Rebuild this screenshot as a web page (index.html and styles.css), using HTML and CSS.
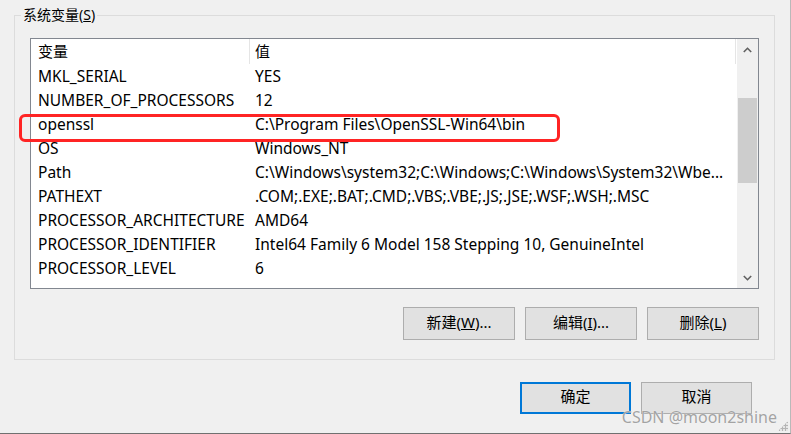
FILE: index.html
```html
<!DOCTYPE html>
<html lang="zh-CN">
<head>
  <meta charset="UTF-8">
  <title>环境变量</title>
  <link rel="stylesheet" href="styles.css">
</head>
<body>
  <div class="window">
    <fieldset class="group">
      <legend>系统变量(<u>S</u>)</legend>
      <div class="group-body">
        <div class="listview">
          <div class="table">
            <div class="row head">
              <div class="cell name">变量</div>
              <div class="cell value">值</div>
            </div>
            <div class="row"><div class="cell">MKL_SERIAL</div><div class="cell">YES</div></div>
            <div class="row"><div class="cell">NUMBER_OF_PROCESSORS</div><div class="cell">12</div></div>
            <div class="row"><div class="cell">openssl</div><div class="cell">C:\Program Files\OpenSSL-Win64\bin</div></div>
            <div class="row"><div class="cell">OS</div><div class="cell">Windows_NT</div></div>
            <div class="row"><div class="cell">Path</div><div class="cell">C:\Windows\system32;C:\Windows;C:\Windows\System32\Wbe...</div></div>
            <div class="row"><div class="cell">PATHEXT</div><div class="cell">.COM;.EXE;.BAT;.CMD;.VBS;.VBE;.JS;.JSE;.WSF;.WSH;.MSC</div></div>
            <div class="row"><div class="cell">PROCESSOR_ARCHITECTURE</div><div class="cell">AMD64</div></div>
            <div class="row"><div class="cell">PROCESSOR_IDENTIFIER</div><div class="cell">Intel64 Family 6 Model 158 Stepping 10, GenuineIntel</div></div>
            <div class="row"><div class="cell">PROCESSOR_LEVEL</div><div class="cell">6</div></div>
          </div>
          <div class="scrollbar">
            <div class="arrow">
              <svg width="9" height="6" viewBox="0 0 9 6"><polyline points="0.8,5 4.5,1.3 8.2,5" fill="none" stroke="#606060" stroke-width="1.6"/></svg>
            </div>
            <div class="track"><div class="thumb"></div></div>
            <div class="arrow">
              <svg width="9" height="6" viewBox="0 0 9 6"><polyline points="0.8,1 4.5,4.7 8.2,1" fill="none" stroke="#606060" stroke-width="1.6"/></svg>
            </div>
          </div>
          <div class="mark"></div>
        </div>
        <div class="actions">
          <button class="btn">新建(<u>W</u>)...</button>
          <button class="btn">编辑(<u>I</u>)...</button>
          <button class="btn">删除(<u>L</u>)</button>
        </div>
      </div>
    </fieldset>

    <div class="dialog-actions">
      <button class="btn btn-default">确定</button>
      <button class="btn">取消</button>
    </div>

    <div class="watermark">CSDN @moon2shine</div>
    <div class="grip"></div>
  </div>
</body>
</html>
```

FILE: styles.css
```css
body {
  margin: 0;
  font-family: "Noto Sans", "Noto Sans CJK SC", sans-serif;
  font-size: 15px;
  color: #000000;
  background-color: #f0f0f0;
}

.window {
  position: relative;
  width: 790px;
  height: 433px;
  background-color: #f0f0f0;
  border-right: 1px solid #b9b9b9;
  border-bottom: 1px solid #707070;
  overflow: hidden;
}

.group {
  width: 761px;
  box-sizing: border-box;
  margin: 6px 0 0 14px;
  padding: 0;
  border: 1px solid #dcdcdc;
}

.group legend {
  margin-left: 6px;
  padding: 0 2px;
  font-size: 14px;
  line-height: 18px;
}

.group-body {
  padding: 14px 15px 19px 15px;
}

.listview {
  position: relative;
  display: flex;
  height: 251px;
  box-sizing: border-box;
  border: 1px solid #828790;
  background: #ffffff;
}

.table {
  flex: 1;
  overflow: hidden;
  font-size: 15.5px;
}

.row {
  display: grid;
  grid-template-columns: 219px 1fr;
  height: 24px;
  line-height: 24px;
  white-space: nowrap;
}

.row.head {
  height: 25px;
  line-height: 25px;
}

.cell {
  padding-left: 7px;
  overflow: hidden;
}

.cell + .cell {
  padding-left: 5px;
}

.head .cell {
  font-size: 15px;
}

.head .name {
  border-right: 1px solid #e5e5e5;
}

.head .value {
  border-right: 1px solid #e5e5e5;
  margin-right: 1px;
}

.scrollbar {
  width: 21px;
  display: flex;
  flex-direction: column;
  background: #f0f0f0;
}

.arrow {
  height: 21px;
  display: flex;
  align-items: center;
  justify-content: center;
}

.track {
  flex: 1;
}

.thumb {
  margin: 38px 1px 0 1px;
  height: 85px;
  background: #cdcdcd;
}

/* red frame round the openssl row */
.mark {
  position: absolute;
  left: -12px;
  top: 75px;
  width: 541px;
  height: 28px;
  box-sizing: border-box;
  border: 3px solid #ff2424;
  border-radius: 6px;
}

.actions {
  display: flex;
  justify-content: flex-end;
  gap: 10px;
  margin-top: 18px;
}

.btn {
  width: 112px;
  height: 33px;
  padding: 0 0 5px 0;
  font-family: "Noto Sans", "Noto Sans CJK SC", sans-serif;
  font-size: 15px;
  color: #000000;
  background: #e1e1e1;
  border: 1px solid #adadad;
}

.dialog-actions {
  display: flex;
  justify-content: flex-end;
  gap: 10px;
  margin-top: 22px;
  padding-right: 38px;
}

.dialog-actions .btn {
  width: 111px;
  height: 32px;
}

.btn-default {
  border: 2px solid #0078d7;
}

.watermark {
  position: absolute;
  right: 13px;
  bottom: 5px;
  font-size: 16px;
  color: #a3a3a3;
  text-shadow: 0 0 1px #ffffff;
}

.grip {
  position: absolute;
  right: 2px;
  bottom: 2px;
  width: 10px;
  height: 10px;
  background: radial-gradient(circle, #b5b5b5 1px, transparent 1.5px) 0 0 / 3px 3px;
  clip-path: polygon(100% 0, 100% 100%, 0 100%);
}
```
